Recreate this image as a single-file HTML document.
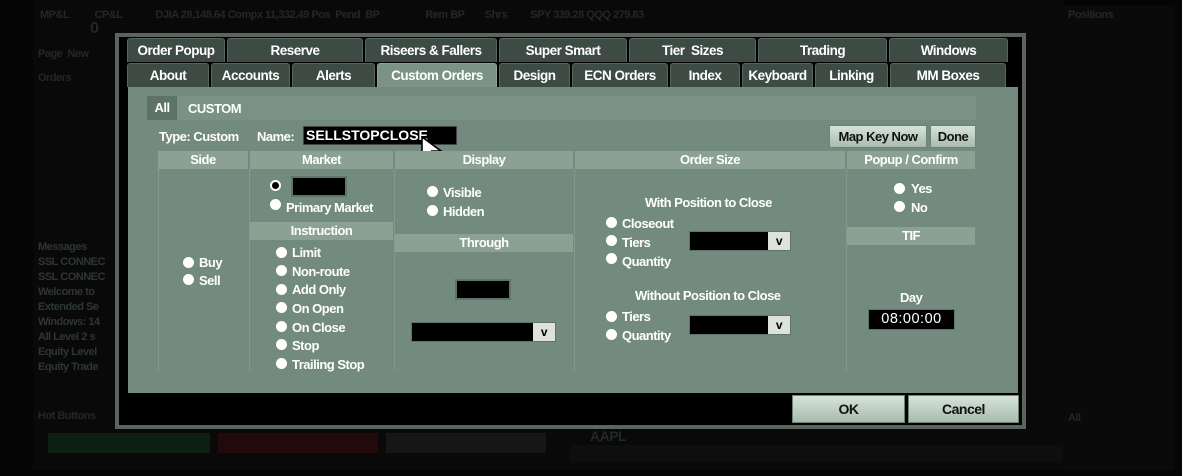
<!DOCTYPE html><html><head><style>
*{margin:0;padding:0;box-sizing:border-box}
body{width:1182px;height:476px;background:#050505;position:relative;overflow:hidden;font-family:"Liberation Sans",sans-serif;font-weight:bold;color:#fff;font-size:13px;letter-spacing:-0.5px}
.a{position:absolute}
.bg{color:#22272a;font-size:11px;font-weight:bold}
.tab{position:absolute;height:24px;background:#3d4b44;border:1px solid #56655d;border-bottom:none;border-radius:3px 3px 0 0;text-align:center;line-height:24px;font-size:13.5px}
.hd{position:absolute;background:#8aa193;height:18px;text-align:center;line-height:18px;font-size:13px}
.r{position:absolute;width:11px;height:11px;border-radius:50%;background:#fff}
.t{position:absolute;font-size:13px;white-space:nowrap}
.blk{position:absolute;background:#000;border:2px solid #5f7468}
.dd{position:absolute;background:#000;border:1px solid #5f7468}
.dd span{position:absolute;right:0;top:0;width:22px;height:100%;background:#dde2de;color:#000;text-align:center;font-size:12px;line-height:18px}
.btn{position:absolute;background:linear-gradient(#d6e3d8,#a8bcae);color:#111;text-align:center;border:1px solid #6c8273}
</style></head><body>
<div class="a" style="left:33px;top:0;width:1030px;height:470px;background:#090909"></div>
<div class="a bg" style="left:40px;top:9px;">MP&amp;L &nbsp;&nbsp;&nbsp;&nbsp;&nbsp;&nbsp;&nbsp;&nbsp;&nbsp;CP&amp;L &nbsp;&nbsp;&nbsp;&nbsp;&nbsp;&nbsp;&nbsp;&nbsp;&nbsp;&nbsp;&nbsp; DJIA 28,148.64 Compx 11,332.49 Pos &nbsp;Pend &nbsp;BP &nbsp;&nbsp;&nbsp;&nbsp;&nbsp;&nbsp;&nbsp;&nbsp;&nbsp;&nbsp;&nbsp;&nbsp;&nbsp;&nbsp;&nbsp;&nbsp; Rem BP &nbsp;&nbsp;&nbsp;&nbsp;&nbsp;&nbsp; Shrs &nbsp;&nbsp;&nbsp;&nbsp;&nbsp;&nbsp;&nbsp; SPY 339.28 QQQ 279.83</div>
<div class="a bg" style="left:90px;top:20px;font-size:16px">0</div>
<div class="a bg" style="left:38px;top:48px">Page &nbsp;New</div>
<div class="a bg" style="left:38px;top:72px">Orders</div>
<div class="a bg" style="left:38px;top:240px;color:#2e3631;line-height:15px">Messages<br>SSL CONNEC<br>SSL CONNEC<br>Welcome to<br>Extended Se<br>Windows: 14<br>All Level 2 s<br>Equity Level<br>Equity Trade</div>
<div class="a bg" style="left:38px;top:410px">Hot Buttons</div>
<div class="a" style="left:48px;top:433px;width:162px;height:20px;background:#0d1f10"></div>
<div class="a" style="left:218px;top:433px;width:160px;height:20px;background:#220a0a"></div>
<div class="a" style="left:386px;top:433px;width:160px;height:20px;background:#161616"></div>
<div class="a bg" style="left:590px;top:428px;font-size:14px">AAPL</div>
<div class="a" style="left:570px;top:445px;width:600px;height:18px;background:#0e0e0e"></div>
<div class="a" style="left:1063px;top:5px;width:112px;height:465px;background:#0a0a0a"></div>
<div class="a bg" style="left:1068px;top:9px">Positions</div>
<div class="a bg" style="left:1068px;top:412px">All</div>
<div class="a" style="left:115px;top:33px;width:911px;height:396px;background:#000;border:4px solid #5c645f"></div>
<div class="tab" style="left:127px;top:38px;width:98px">Order Popup</div>
<div class="tab" style="left:227px;top:38px;width:136px">Reserve</div>
<div class="tab" style="left:365px;top:38px;width:132px">Riseers &amp; Fallers</div>
<div class="tab" style="left:499px;top:38px;width:128px">Super Smart</div>
<div class="tab" style="left:629px;top:38px;width:127px">Tier&nbsp; Sizes</div>
<div class="tab" style="left:758px;top:38px;width:129px">Trading</div>
<div class="tab" style="left:889px;top:38px;width:119px">Windows</div>
<div class="tab" style="left:127px;top:63px;width:82px">About</div>
<div class="tab" style="left:211px;top:63px;width:79px">Accounts</div>
<div class="tab" style="left:292px;top:63px;width:83px">Alerts</div>
<div class="tab" style="left:377px;top:63px;width:120px;background:#7b9387;border-color:#8da395">Custom Orders</div>
<div class="tab" style="left:499px;top:63px;width:71px">Design</div>
<div class="tab" style="left:572px;top:63px;width:96px">ECN Orders</div>
<div class="tab" style="left:670px;top:63px;width:70px">Index</div>
<div class="tab" style="left:742px;top:63px;width:71px">Keyboard</div>
<div class="tab" style="left:815px;top:63px;width:73px">Linking</div>
<div class="tab" style="left:890px;top:63px;width:116px">MM Boxes</div>
<div class="a" style="left:128px;top:87px;width:890px;height:306px;background:#728b7e"></div>
<div class="a" style="left:147px;top:96px;width:829px;height:24px;background:#7a9285"></div>
<div class="a" style="left:147px;top:96px;width:30px;height:24px;background:#5d7367;text-align:center;line-height:24px">All</div>
<div class="t" style="left:188px;top:101px">CUSTOM</div>
<div class="t" style="left:159px;top:129px">Type: Custom</div>
<div class="t" style="left:257px;top:129px">Name:</div>
<div class="a" style="left:303px;top:126px;width:154px;height:19px;background:#000;border:1px solid #444;font-size:14px;line-height:17px;padding-left:2px;letter-spacing:0">SELLSTOPCLOSE</div>
<svg class="a" style="left:420px;top:136px" width="28" height="30" viewBox="0 0 28 30"><path d="M2 1 L2 23 L8 17 L13 27 L17 25 L12 15 L21 15 Z" fill="#fff" stroke="#000" stroke-width="1.6"/></svg>
<div class="btn" style="left:829px;top:125px;width:98px;height:23px;line-height:21px">Map Key Now</div>
<div class="btn" style="left:930px;top:125px;width:46px;height:23px;line-height:21px">Done</div>
<div class="a" style="left:158px;top:151px;width:817px;height:219px;border-left:1px solid #839a8c"></div>
<div class="hd" style="left:158px;top:151px;width:90px">Side</div>
<div class="hd" style="left:250px;top:151px;width:143px">Market</div>
<div class="hd" style="left:395px;top:151px;width:178px">Display</div>
<div class="hd" style="left:575px;top:151px;width:270px">Order Size</div>
<div class="hd" style="left:847px;top:151px;width:128px">Popup / Confirm</div>
<div class="a" style="left:249px;top:169px;width:1px;height:201px;background:#839a8c"></div>
<div class="a" style="left:394px;top:169px;width:1px;height:201px;background:#839a8c"></div>
<div class="a" style="left:574px;top:169px;width:1px;height:201px;background:#839a8c"></div>
<div class="a" style="left:846px;top:169px;width:1px;height:201px;background:#839a8c"></div>
<div class="r" style="left:183px;top:257px"></div><div class="t" style="left:199px;top:255px">Buy</div>
<div class="r" style="left:183px;top:274px"></div><div class="t" style="left:199px;top:273px">Sell</div>
<div class="r" style="left:270px;top:180px;border:2px solid #fff;background:#000"></div>
<div class="blk" style="left:291px;top:176px;width:56px;height:21px"></div>
<div class="r" style="left:270px;top:199px"></div><div class="t" style="left:286px;top:200px">Primary Market</div>
<div class="hd" style="left:250px;top:222px;width:143px">Instruction</div>
<div class="r" style="left:276px;top:247px"></div><div class="t" style="left:292px;top:245px">Limit</div>
<div class="r" style="left:276px;top:265px"></div><div class="t" style="left:292px;top:264px">Non-route</div>
<div class="r" style="left:276px;top:284px"></div><div class="t" style="left:292px;top:282px">Add Only</div>
<div class="r" style="left:276px;top:302px"></div><div class="t" style="left:292px;top:301px">On Open</div>
<div class="r" style="left:276px;top:321px"></div><div class="t" style="left:292px;top:320px">On Close</div>
<div class="r" style="left:276px;top:339px"></div><div class="t" style="left:292px;top:338px">Stop</div>
<div class="r" style="left:276px;top:358px"></div><div class="t" style="left:292px;top:357px">Trailing Stop</div>
<div class="r" style="left:427px;top:186px"></div><div class="t" style="left:443px;top:185px">Visible</div>
<div class="r" style="left:427px;top:205px"></div><div class="t" style="left:443px;top:204px">Hidden</div>
<div class="hd" style="left:395px;top:234px;width:178px">Through</div>
<div class="blk" style="left:455px;top:279px;width:56px;height:21px"></div>
<div class="dd" style="left:411px;top:322px;width:145px;height:20px"><span>v</span></div>
<div class="t" style="left:645px;top:195px">With Position to Close</div>
<div class="r" style="left:606px;top:217px"></div><div class="t" style="left:622px;top:216px">Closeout</div>
<div class="r" style="left:606px;top:235px"></div><div class="t" style="left:622px;top:235px">Tiers</div>
<div class="r" style="left:606px;top:253px"></div><div class="t" style="left:622px;top:254px">Quantity</div>
<div class="dd" style="left:689px;top:231px;width:102px;height:20px"><span>v</span></div>
<div class="t" style="left:635px;top:288px">Without Position to Close</div>
<div class="r" style="left:606px;top:311px"></div><div class="t" style="left:622px;top:309px">Tiers</div>
<div class="r" style="left:606px;top:329px"></div><div class="t" style="left:622px;top:328px">Quantity</div>
<div class="dd" style="left:689px;top:315px;width:102px;height:20px"><span>v</span></div>
<div class="r" style="left:894px;top:183px"></div><div class="t" style="left:911px;top:181px">Yes</div>
<div class="r" style="left:894px;top:201px"></div><div class="t" style="left:911px;top:200px">No</div>
<div class="hd" style="left:847px;top:227px;width:128px">TIF</div>
<div class="t" style="left:900px;top:290px">Day</div>
<div class="a" style="left:868px;top:309px;width:87px;height:21px;background:#000;border:1px solid #5f7468;text-align:center;font-size:14.5px;line-height:19px;font-weight:normal;letter-spacing:0.5px">08:00:00</div>
<div class="btn" style="left:792px;top:395px;width:113px;height:28px;line-height:26px;font-size:14px">OK</div>
<div class="btn" style="left:908px;top:395px;width:111px;height:28px;line-height:26px;font-size:14px">Cancel</div>
</body></html>
